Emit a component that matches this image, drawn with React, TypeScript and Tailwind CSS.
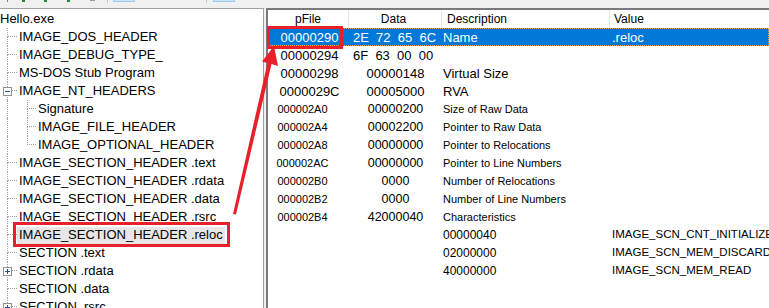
import React from 'react';

type TreeNode = {
  label: string;
  level: 0 | 1 | 2;
  box?: 'plus' | 'minus';
  selected?: boolean;
  lastChild?: boolean;
};

const tree: TreeNode[] = [
  { label: 'Hello.exe', level: 0 },
  { label: 'IMAGE_DOS_HEADER', level: 1 },
  { label: 'IMAGE_DEBUG_TYPE_', level: 1 },
  { label: 'MS-DOS Stub Program', level: 1 },
  { label: 'IMAGE_NT_HEADERS', level: 1, box: 'minus' },
  { label: 'Signature', level: 2 },
  { label: 'IMAGE_FILE_HEADER', level: 2 },
  { label: 'IMAGE_OPTIONAL_HEADER', level: 2, lastChild: true },
  { label: 'IMAGE_SECTION_HEADER .text', level: 1 },
  { label: 'IMAGE_SECTION_HEADER .rdata', level: 1 },
  { label: 'IMAGE_SECTION_HEADER .data', level: 1 },
  { label: 'IMAGE_SECTION_HEADER .rsrc', level: 1 },
  { label: 'IMAGE_SECTION_HEADER .reloc', level: 1, selected: true },
  { label: 'SECTION .text', level: 1 },
  { label: 'SECTION .rdata', level: 1, box: 'plus' },
  { label: 'SECTION .data', level: 1 },
  { label: 'SECTION .rsrc', level: 1, box: 'plus' },
];

type Row = {
  pfile: string;
  data: string;
  desc: string;
  value: string;
  big?: boolean;
  selected?: boolean;
  rawBytes?: boolean;
  flagRow?: boolean;
};

const rows: Row[] = [
  { pfile: '00000290', data: '2E  72  65  6C', desc: 'Name', value: '.reloc', big: true, selected: true, rawBytes: true },
  { pfile: '00000294', data: '6F  63  00  00', desc: '', value: '', big: true, rawBytes: true },
  { pfile: '00000298', data: '00000148', desc: 'Virtual Size', value: '', big: true },
  { pfile: '0000029C', data: '00005000', desc: 'RVA', value: '', big: true },
  { pfile: '000002A0', data: '00000200', desc: 'Size of Raw Data', value: '' },
  { pfile: '000002A4', data: '00002200', desc: 'Pointer to Raw Data', value: '' },
  { pfile: '000002A8', data: '00000000', desc: 'Pointer to Relocations', value: '' },
  { pfile: '000002AC', data: '00000000', desc: 'Pointer to Line Numbers', value: '' },
  { pfile: '000002B0', data: '0000', desc: 'Number of Relocations', value: '' },
  { pfile: '000002B2', data: '0000', desc: 'Number of Line Numbers', value: '' },
  { pfile: '000002B4', data: '42000040', desc: 'Characteristics', value: '' },
  { pfile: '', data: '', desc: '00000040', value: 'IMAGE_SCN_CNT_INITIALIZED_DATA', flagRow: true },
  { pfile: '', data: '', desc: '02000000', value: 'IMAGE_SCN_MEM_DISCARDABLE', flagRow: true },
  { pfile: '', data: '', desc: '40000000', value: 'IMAGE_SCN_MEM_READ', flagRow: true },
];

function ExpandBox({ kind }: { kind: 'plus' | 'minus' }) {
  return (
    <div className="absolute left-[3px] top-[5px] flex h-[9px] w-[9px] items-center justify-center border border-[#919191] bg-white">
      <div className="relative h-[5px] w-[5px]">
        <div className="absolute left-0 top-[2px] h-[1px] w-[5px] bg-[#2a4fa8]" />
        {kind === 'plus' && <div className="absolute left-[2px] top-0 h-[5px] w-[1px] bg-[#2a4fa8]" />}
      </div>
    </div>
  );
}

function Connector({ continues, box }: { continues: boolean; box?: 'plus' | 'minus' }) {
  return (
    <div className="relative flex h-full w-[17px] shrink-0">
      <div className="w-[7px]" />
      <div className="flex w-[10px] flex-col">
        <div className="h-[9px] border-b border-l border-dotted border-[#a0a0a0]" />
        <div className={continues ? 'flex-1 border-l border-dotted border-[#a0a0a0]' : 'flex-1'} />
      </div>
      {box && <ExpandBox kind={box} />}
    </div>
  );
}

function TreeRow({ node }: { node: TreeNode }) {
  if (node.level === 0) {
    return (
      <div className="flex h-[18px] items-center whitespace-nowrap">
        <span>{node.label}</span>
      </div>
    );
  }
  return (
    <div className="flex h-[18px] items-center whitespace-nowrap">
      {node.level === 2 && (
        <div className="flex h-full w-[20px] shrink-0">
          <div className="w-[7px]" />
          <div className="h-full border-l border-dotted border-[#a0a0a0]" />
        </div>
      )}
      {node.level === 2 ? (
        <div className="flex h-full w-[16px] shrink-0">
          <div className="w-[7px]" />
          <div className="flex w-[9px] flex-col">
            <div className="h-[9px] border-b border-l border-dotted border-[#a0a0a0]" />
            <div className={node.lastChild ? 'flex-1' : 'flex-1 border-l border-dotted border-[#a0a0a0]'} />
          </div>
        </div>
      ) : (
        <Connector continues box={node.box} />
      )}
      <span
        className={
          node.selected
            ? 'flex h-[17px] items-center bg-[#e6e6e6] px-[2px]'
            : 'flex h-[17px] items-center px-[2px]'
        }
      >
        {node.label}
      </span>
    </div>
  );
}

function DataRow({ row }: { row: Row }) {
  // the first four rows were drawn in the larger UI font, the rest in the old bitmap font
  const pfileCls = row.big ? 'pl-[2px] text-center text-[13px]' : 'pr-[12px] text-center text-[11px]';
  const dataCls = row.rawBytes
    ? 'whitespace-pre pl-[4px] text-[13px]'
    : row.big
      ? 'text-center text-[13px]'
      : 'text-center text-[12.5px]';
  const descCls = row.big ? 'text-[13px]' : row.flagRow ? 'text-[12px]' : 'text-[11px]';
  const valueCls = row.big ? 'text-[13px]' : 'text-[11.5px]';
  return (
    <div
      className={
        row.selected
          ? 'grid h-[18px] grid-cols-[81px_93px_168px_1fr] items-center bg-[#0078d7] text-white outline-1 -outline-offset-1 outline-dotted outline-[#f2a54a]'
          : 'grid h-[18px] grid-cols-[81px_93px_168px_1fr] items-center text-black'
      }
    >
      <div className={pfileCls}>{row.pfile}</div>
      <div className={dataCls}>{row.data}</div>
      <div className={`overflow-hidden whitespace-nowrap pl-[1px] ${descCls}`}>{row.desc}</div>
      <div className={`overflow-hidden whitespace-nowrap pl-[2px] ${valueCls}`}>{row.value}</div>
    </div>
  );
}

export default function App() {
  return (
    <div className="relative h-[308px] w-[769px] overflow-hidden bg-[#f0f0f0] font-['Liberation_Sans',Arial,sans-serif] text-[13px] text-black">
      {/* cropped toolbar */}
      <div className="relative h-[8px]">
        <div className="absolute left-[7px] top-0 h-[2px] w-[1px] bg-[#808080]" />
        <div className="absolute left-[22px] top-0 h-[2px] w-[3px] bg-[#1f8a2e]" />
        <div className="absolute left-[44px] top-0 h-[2px] w-[3px] bg-[#1f8a2e]" />
        <div className="absolute left-[67px] top-0 h-[2px] w-[3px] bg-[#1f8a2e]" />
        <div className="absolute left-[90px] top-0 h-[1px] w-[5px] bg-[#9a9a9a]" />
        <div className="absolute left-[107px] top-0 h-[3px] w-[1px] bg-[#c8c8c8]" />
        <div className="absolute left-[113px] top-0 h-[2px] w-[22px] border-b border-l border-r border-[#9ccaf0] bg-[#cce4f7]" />
        <div className="absolute left-[206px] top-0 h-[3px] w-[1px] bg-[#c8c8c8]" />
        <div className="absolute left-[213px] top-0 h-[2px] w-[22px] border-b border-l border-r border-[#9ccaf0] bg-[#cce4f7]" />
      </div>

      <div className="flex h-[300px]">
        {/* tree */}
        <div className="h-full w-[264px] shrink-0 overflow-hidden border-r border-t border-[#a0a0a0] bg-white pt-[1px]">
          {tree.map((n) => (
            <TreeRow key={n.label} node={n} />
          ))}
        </div>

        <div className="w-[2px] shrink-0" />

        {/* list */}
        <div className="h-full flex-1 overflow-hidden border-l-2 border-t-2 border-[#7a7a7a] bg-white">
          <div className="grid h-[18px] grid-cols-[81px_93px_168px_1fr] items-center text-[12px]">
            <div className="flex h-full items-center justify-center border-r border-[#e5e5e5]">pFile</div>
            <div className="flex h-full items-center justify-center border-r border-[#e5e5e5] pr-[3px]">Data</div>
            <div className="flex h-full items-center border-r border-[#e5e5e5] pl-[5px]">Description</div>
            <div className="flex h-full items-center pl-[4px]">Value</div>
          </div>
          {rows.map((r, i) => (
            <DataRow key={i} row={r} />
          ))}
        </div>
      </div>

      {/* annotation boxes */}
      <div className="pointer-events-none absolute left-[13px] top-[222px] h-[25px] w-[217px] border-[3px] border-[#e8202a]" />
      <div className="pointer-events-none absolute left-[267px] top-[26px] h-[23px] w-[76px] border-[3px] border-[#e8202a]" />

      {/* annotation arrow */}
      <svg className="pointer-events-none absolute left-0 top-0" width="769" height="308" viewBox="0 0 769 308">
        <polygon
          points="233,214 236,214.5 271.5,64 278,66 274,46 262,61.5 267.5,63"
          fill="#e8202a"
        />
      </svg>
    </div>
  );
}
